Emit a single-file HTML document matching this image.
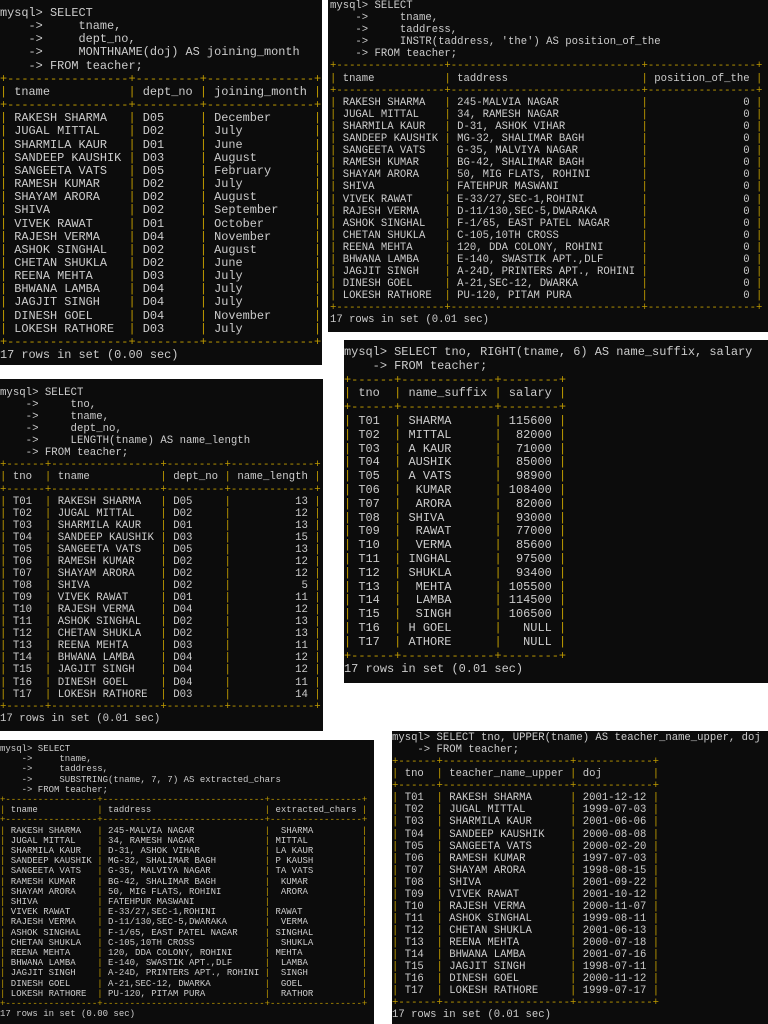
<!DOCTYPE html>
<html><head><meta charset="utf-8"><style>
html,body{margin:0;padding:0;background:#fff;width:768px;height:1024px;overflow:hidden;position:relative}
pre{position:absolute;margin:0;background:#0c0c0c;color:#cccccc;font-family:"Liberation Mono",monospace;overflow:hidden;white-space:pre;box-sizing:border-box}
s{color:#c19c00;text-decoration:none}
</style></head><body>

<pre style="left:0;top:0;width:322px;height:365px;font-size:11.9px;line-height:13.15px;padding-top:7px">mysql&gt; SELECT
    -&gt;     tname,
    -&gt;     dept_no,
    -&gt;     MONTHNAME(doj) AS joining_month
    -&gt; FROM teacher;
<s>+-----------------+---------+---------------+</s>
<s>|</s> tname           <s>|</s> dept_no <s>|</s> joining_month <s>|</s>
<s>+-----------------+---------+---------------+</s>
<s>|</s> RAKESH SHARMA   <s>|</s> D05     <s>|</s> December      <s>|</s>
<s>|</s> JUGAL MITTAL    <s>|</s> D02     <s>|</s> July          <s>|</s>
<s>|</s> SHARMILA KAUR   <s>|</s> D01     <s>|</s> June          <s>|</s>
<s>|</s> SANDEEP KAUSHIK <s>|</s> D03     <s>|</s> August        <s>|</s>
<s>|</s> SANGEETA VATS   <s>|</s> D05     <s>|</s> February      <s>|</s>
<s>|</s> RAMESH KUMAR    <s>|</s> D02     <s>|</s> July          <s>|</s>
<s>|</s> SHAYAM ARORA    <s>|</s> D02     <s>|</s> August        <s>|</s>
<s>|</s> SHIVA           <s>|</s> D02     <s>|</s> September     <s>|</s>
<s>|</s> VIVEK RAWAT     <s>|</s> D01     <s>|</s> October       <s>|</s>
<s>|</s> RAJESH VERMA    <s>|</s> D04     <s>|</s> November      <s>|</s>
<s>|</s> ASHOK SINGHAL   <s>|</s> D02     <s>|</s> August        <s>|</s>
<s>|</s> CHETAN SHUKLA   <s>|</s> D02     <s>|</s> June          <s>|</s>
<s>|</s> REENA MEHTA     <s>|</s> D03     <s>|</s> July          <s>|</s>
<s>|</s> BHWANA LAMBA    <s>|</s> D04     <s>|</s> July          <s>|</s>
<s>|</s> JAGJIT SINGH    <s>|</s> D04     <s>|</s> July          <s>|</s>
<s>|</s> DINESH GOEL     <s>|</s> D04     <s>|</s> November      <s>|</s>
<s>|</s> LOKESH RATHORE  <s>|</s> D03     <s>|</s> July          <s>|</s>
<s>+-----------------+---------+---------------+</s>
17 rows in set (0.00 sec)</pre>

<pre style="left:328px;top:0;width:440px;height:332px;font-size:10.6px;line-height:12.1px;padding-top:0;padding-left:2px">mysql&gt; SELECT
    -&gt;     tname,
    -&gt;     taddress,
    -&gt;     INSTR(taddress, 'the') AS position_of_the
    -&gt; FROM teacher;
<s>+-----------------+------------------------------+-----------------+</s>
<s>|</s> tname           <s>|</s> taddress                     <s>|</s> position_of_the <s>|</s>
<s>+-----------------+------------------------------+-----------------+</s>
<s>|</s> RAKESH SHARMA   <s>|</s> 245-MALVIA NAGAR             <s>|</s>               0 <s>|</s>
<s>|</s> JUGAL MITTAL    <s>|</s> 34, RAMESH NAGAR             <s>|</s>               0 <s>|</s>
<s>|</s> SHARMILA KAUR   <s>|</s> D-31, ASHOK VIHAR            <s>|</s>               0 <s>|</s>
<s>|</s> SANDEEP KAUSHIK <s>|</s> MG-32, SHALIMAR BAGH         <s>|</s>               0 <s>|</s>
<s>|</s> SANGEETA VATS   <s>|</s> G-35, MALVIYA NAGAR          <s>|</s>               0 <s>|</s>
<s>|</s> RAMESH KUMAR    <s>|</s> BG-42, SHALIMAR BAGH         <s>|</s>               0 <s>|</s>
<s>|</s> SHAYAM ARORA    <s>|</s> 50, MIG FLATS, ROHINI        <s>|</s>               0 <s>|</s>
<s>|</s> SHIVA           <s>|</s> FATEHPUR MASWANI             <s>|</s>               0 <s>|</s>
<s>|</s> VIVEK RAWAT     <s>|</s> E-33/27,SEC-1,ROHINI         <s>|</s>               0 <s>|</s>
<s>|</s> RAJESH VERMA    <s>|</s> D-11/130,SEC-5,DWARAKA       <s>|</s>               0 <s>|</s>
<s>|</s> ASHOK SINGHAL   <s>|</s> F-1/65, EAST PATEL NAGAR     <s>|</s>               0 <s>|</s>
<s>|</s> CHETAN SHUKLA   <s>|</s> C-105,10TH CROSS             <s>|</s>               0 <s>|</s>
<s>|</s> REENA MEHTA     <s>|</s> 120, DDA COLONY, ROHINI      <s>|</s>               0 <s>|</s>
<s>|</s> BHWANA LAMBA    <s>|</s> E-140, SWASTIK APT.,DLF      <s>|</s>               0 <s>|</s>
<s>|</s> JAGJIT SINGH    <s>|</s> A-24D, PRINTERS APT., ROHINI <s>|</s>               0 <s>|</s>
<s>|</s> DINESH GOEL     <s>|</s> A-21,SEC-12, DWARKA          <s>|</s>               0 <s>|</s>
<s>|</s> LOKESH RATHORE  <s>|</s> PU-120, PITAM PURA           <s>|</s>               0 <s>|</s>
<s>+-----------------+------------------------------+-----------------+</s>
17 rows in set (0.01 sec)</pre>

<pre style="left:0;top:379px;width:323px;height:352px;font-size:10.7px;line-height:12.07px;padding-top:8px">mysql&gt; SELECT
    -&gt;     tno,
    -&gt;     tname,
    -&gt;     dept_no,
    -&gt;     LENGTH(tname) AS name_length
    -&gt; FROM teacher;
<s>+------+-----------------+---------+-------------+</s>
<s>|</s> tno  <s>|</s> tname           <s>|</s> dept_no <s>|</s> name_length <s>|</s>
<s>+------+-----------------+---------+-------------+</s>
<s>|</s> T01  <s>|</s> RAKESH SHARMA   <s>|</s> D05     <s>|</s>          13 <s>|</s>
<s>|</s> T02  <s>|</s> JUGAL MITTAL    <s>|</s> D02     <s>|</s>          12 <s>|</s>
<s>|</s> T03  <s>|</s> SHARMILA KAUR   <s>|</s> D01     <s>|</s>          13 <s>|</s>
<s>|</s> T04  <s>|</s> SANDEEP KAUSHIK <s>|</s> D03     <s>|</s>          15 <s>|</s>
<s>|</s> T05  <s>|</s> SANGEETA VATS   <s>|</s> D05     <s>|</s>          13 <s>|</s>
<s>|</s> T06  <s>|</s> RAMESH KUMAR    <s>|</s> D02     <s>|</s>          12 <s>|</s>
<s>|</s> T07  <s>|</s> SHAYAM ARORA    <s>|</s> D02     <s>|</s>          12 <s>|</s>
<s>|</s> T08  <s>|</s> SHIVA           <s>|</s> D02     <s>|</s>           5 <s>|</s>
<s>|</s> T09  <s>|</s> VIVEK RAWAT     <s>|</s> D01     <s>|</s>          11 <s>|</s>
<s>|</s> T10  <s>|</s> RAJESH VERMA    <s>|</s> D04     <s>|</s>          12 <s>|</s>
<s>|</s> T11  <s>|</s> ASHOK SINGHAL   <s>|</s> D02     <s>|</s>          13 <s>|</s>
<s>|</s> T12  <s>|</s> CHETAN SHUKLA   <s>|</s> D02     <s>|</s>          13 <s>|</s>
<s>|</s> T13  <s>|</s> REENA MEHTA     <s>|</s> D03     <s>|</s>          11 <s>|</s>
<s>|</s> T14  <s>|</s> BHWANA LAMBA    <s>|</s> D04     <s>|</s>          12 <s>|</s>
<s>|</s> T15  <s>|</s> JAGJIT SINGH    <s>|</s> D04     <s>|</s>          12 <s>|</s>
<s>|</s> T16  <s>|</s> DINESH GOEL     <s>|</s> D04     <s>|</s>          11 <s>|</s>
<s>|</s> T17  <s>|</s> LOKESH RATHORE  <s>|</s> D03     <s>|</s>          14 <s>|</s>
<s>+------+-----------------+---------+-------------+</s>
17 rows in set (0.01 sec)</pre>

<pre style="left:344px;top:340px;width:424px;height:343px;font-size:11.95px;line-height:13.8px;padding-top:6px">mysql&gt; SELECT tno, RIGHT(tname, 6) AS name_suffix, salary
    -&gt; FROM teacher;
<s>+------+-------------+--------+</s>
<s>|</s> tno  <s>|</s> name_suffix <s>|</s> salary <s>|</s>
<s>+------+-------------+--------+</s>
<s>|</s> T01  <s>|</s> SHARMA      <s>|</s> 115600 <s>|</s>
<s>|</s> T02  <s>|</s> MITTAL      <s>|</s>  82000 <s>|</s>
<s>|</s> T03  <s>|</s> A KAUR      <s>|</s>  71000 <s>|</s>
<s>|</s> T04  <s>|</s> AUSHIK      <s>|</s>  85000 <s>|</s>
<s>|</s> T05  <s>|</s> A VATS      <s>|</s>  98900 <s>|</s>
<s>|</s> T06  <s>|</s>  KUMAR      <s>|</s> 108400 <s>|</s>
<s>|</s> T07  <s>|</s>  ARORA      <s>|</s>  82000 <s>|</s>
<s>|</s> T08  <s>|</s> SHIVA       <s>|</s>  93000 <s>|</s>
<s>|</s> T09  <s>|</s>  RAWAT      <s>|</s>  77000 <s>|</s>
<s>|</s> T10  <s>|</s>  VERMA      <s>|</s>  85600 <s>|</s>
<s>|</s> T11  <s>|</s> INGHAL      <s>|</s>  97500 <s>|</s>
<s>|</s> T12  <s>|</s> SHUKLA      <s>|</s>  93400 <s>|</s>
<s>|</s> T13  <s>|</s>  MEHTA      <s>|</s> 105500 <s>|</s>
<s>|</s> T14  <s>|</s>  LAMBA      <s>|</s> 114500 <s>|</s>
<s>|</s> T15  <s>|</s>  SINGH      <s>|</s> 106500 <s>|</s>
<s>|</s> T16  <s>|</s> H GOEL      <s>|</s>   NULL <s>|</s>
<s>|</s> T17  <s>|</s> ATHORE      <s>|</s>   NULL <s>|</s>
<s>+------+-------------+--------+</s>
17 rows in set (0.01 sec)</pre>

<pre style="left:0;top:740px;width:374px;height:284px;font-size:9px;line-height:10.2px;padding-top:4px">mysql&gt; SELECT
    -&gt;     tname,
    -&gt;     taddress,
    -&gt;     SUBSTRING(tname, 7, 7) AS extracted_chars
    -&gt; FROM teacher;
<s>+-----------------+------------------------------+-----------------+</s>
<s>|</s> tname           <s>|</s> taddress                     <s>|</s> extracted_chars <s>|</s>
<s>+-----------------+------------------------------+-----------------+</s>
<s>|</s> RAKESH SHARMA   <s>|</s> 245-MALVIA NAGAR             <s>|</s>  SHARMA         <s>|</s>
<s>|</s> JUGAL MITTAL    <s>|</s> 34, RAMESH NAGAR             <s>|</s> MITTAL          <s>|</s>
<s>|</s> SHARMILA KAUR   <s>|</s> D-31, ASHOK VIHAR            <s>|</s> LA KAUR         <s>|</s>
<s>|</s> SANDEEP KAUSHIK <s>|</s> MG-32, SHALIMAR BAGH         <s>|</s> P KAUSH         <s>|</s>
<s>|</s> SANGEETA VATS   <s>|</s> G-35, MALVIYA NAGAR          <s>|</s> TA VATS         <s>|</s>
<s>|</s> RAMESH KUMAR    <s>|</s> BG-42, SHALIMAR BAGH         <s>|</s>  KUMAR          <s>|</s>
<s>|</s> SHAYAM ARORA    <s>|</s> 50, MIG FLATS, ROHINI        <s>|</s>  ARORA          <s>|</s>
<s>|</s> SHIVA           <s>|</s> FATEHPUR MASWANI             <s>|</s>                 <s>|</s>
<s>|</s> VIVEK RAWAT     <s>|</s> E-33/27,SEC-1,ROHINI         <s>|</s> RAWAT           <s>|</s>
<s>|</s> RAJESH VERMA    <s>|</s> D-11/130,SEC-5,DWARAKA       <s>|</s>  VERMA          <s>|</s>
<s>|</s> ASHOK SINGHAL   <s>|</s> F-1/65, EAST PATEL NAGAR     <s>|</s> SINGHAL         <s>|</s>
<s>|</s> CHETAN SHUKLA   <s>|</s> C-105,10TH CROSS             <s>|</s>  SHUKLA         <s>|</s>
<s>|</s> REENA MEHTA     <s>|</s> 120, DDA COLONY, ROHINI      <s>|</s> MEHTA           <s>|</s>
<s>|</s> BHWANA LAMBA    <s>|</s> E-140, SWASTIK APT.,DLF      <s>|</s>  LAMBA          <s>|</s>
<s>|</s> JAGJIT SINGH    <s>|</s> A-24D, PRINTERS APT., ROHINI <s>|</s>  SINGH          <s>|</s>
<s>|</s> DINESH GOEL     <s>|</s> A-21,SEC-12, DWARKA          <s>|</s>  GOEL           <s>|</s>
<s>|</s> LOKESH RATHORE  <s>|</s> PU-120, PITAM PURA           <s>|</s>  RATHOR         <s>|</s>
<s>+-----------------+------------------------------+-----------------+</s>
17 rows in set (0.00 sec)</pre>

<pre style="left:392px;top:731px;width:376px;height:293px;font-size:10.6px;line-height:12.07px;padding-top:1px">mysql&gt; SELECT tno, UPPER(tname) AS teacher_name_upper, doj
    -&gt; FROM teacher;
<s>+------+--------------------+------------+</s>
<s>|</s> tno  <s>|</s> teacher_name_upper <s>|</s> doj        <s>|</s>
<s>+------+--------------------+------------+</s>
<s>|</s> T01  <s>|</s> RAKESH SHARMA      <s>|</s> 2001-12-12 <s>|</s>
<s>|</s> T02  <s>|</s> JUGAL MITTAL       <s>|</s> 1999-07-03 <s>|</s>
<s>|</s> T03  <s>|</s> SHARMILA KAUR      <s>|</s> 2001-06-06 <s>|</s>
<s>|</s> T04  <s>|</s> SANDEEP KAUSHIK    <s>|</s> 2000-08-08 <s>|</s>
<s>|</s> T05  <s>|</s> SANGEETA VATS      <s>|</s> 2000-02-20 <s>|</s>
<s>|</s> T06  <s>|</s> RAMESH KUMAR       <s>|</s> 1997-07-03 <s>|</s>
<s>|</s> T07  <s>|</s> SHAYAM ARORA       <s>|</s> 1998-08-15 <s>|</s>
<s>|</s> T08  <s>|</s> SHIVA              <s>|</s> 2001-09-22 <s>|</s>
<s>|</s> T09  <s>|</s> VIVEK RAWAT        <s>|</s> 2001-10-12 <s>|</s>
<s>|</s> T10  <s>|</s> RAJESH VERMA       <s>|</s> 2000-11-07 <s>|</s>
<s>|</s> T11  <s>|</s> ASHOK SINGHAL      <s>|</s> 1999-08-11 <s>|</s>
<s>|</s> T12  <s>|</s> CHETAN SHUKLA      <s>|</s> 2001-06-13 <s>|</s>
<s>|</s> T13  <s>|</s> REENA MEHTA        <s>|</s> 2000-07-18 <s>|</s>
<s>|</s> T14  <s>|</s> BHWANA LAMBA       <s>|</s> 2001-07-16 <s>|</s>
<s>|</s> T15  <s>|</s> JAGJIT SINGH       <s>|</s> 1998-07-11 <s>|</s>
<s>|</s> T16  <s>|</s> DINESH GOEL        <s>|</s> 2000-11-12 <s>|</s>
<s>|</s> T17  <s>|</s> LOKESH RATHORE     <s>|</s> 1999-07-17 <s>|</s>
<s>+------+--------------------+------------+</s>
17 rows in set (0.01 sec)</pre>

</body></html>
